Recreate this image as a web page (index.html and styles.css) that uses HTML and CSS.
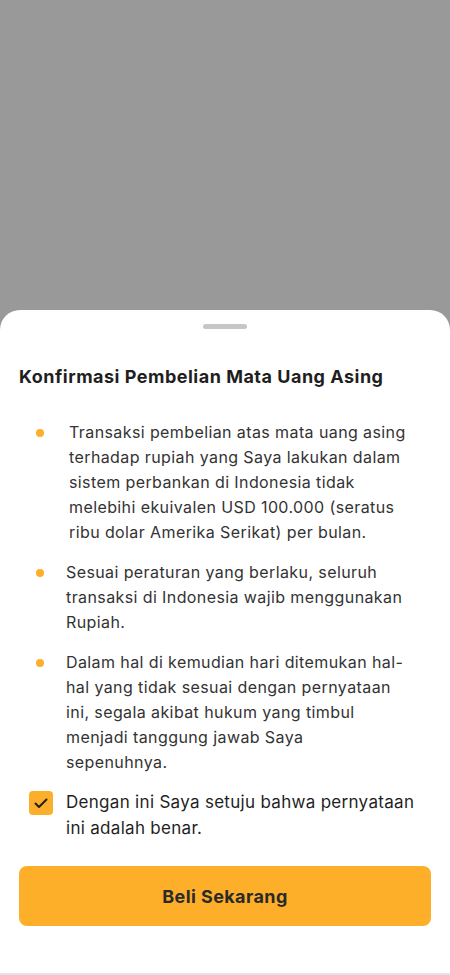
FILE: index.html
```html
<!DOCTYPE html>
<html lang="id">
<head>
    <meta charset="UTF-8">
    <meta name="viewport" content="width=device-width, initial-scale=1.0">
    <title>Konfirmasi Pembelian Mata Uang Asing</title>
    <link rel="stylesheet" href="styles.css">
</head>
<body>

    <div class="backdrop"></div>

    <!-- Bottom sheet -->
    <section class="sheet">
        <div class="handle"></div>

        <h1 class="sheet-title">Konfirmasi Pembelian Mata Uang Asing</h1>

        <ul class="terms">
            <li class="term term-first">
                Transaksi pembelian atas mata uang asing terhadap rupiah yang Saya lakukan dalam sistem perbankan di Indonesia tidak melebihi ekuivalen USD 100.000 (seratus ribu dolar Amerika Serikat) per bulan.
            </li>
            <li class="term">
                Sesuai peraturan yang berlaku, seluruh transaksi di Indonesia wajib menggunakan Rupiah.
            </li>
            <li class="term">
                Dalam hal di kemudian hari ditemukan hal-hal yang tidak sesuai dengan pernyataan ini, segala akibat hukum yang timbul menjadi tanggung jawab Saya sepenuhnya.
            </li>
        </ul>

        <label class="agree">
            <span class="checkbox">
                <svg width="14" height="11" viewBox="0 0 14 11">
                    <path d="M1.5 5.5 L5 9 L12.5 1.5" fill="none" stroke="#222" stroke-width="2" stroke-linecap="round" stroke-linejoin="round"/>
                </svg>
            </span>
            <span class="agree-text">Dengan ini Saya setuju bahwa pernyataan ini adalah benar.</span>
        </label>

        <button class="buy-btn">Beli Sekarang</button>
    </section>

</body>
</html>
```

FILE: styles.css
```css
/* Base */
body {
    margin: 0;
    padding: 0;
    height: 975px;
    display: flex;
    flex-direction: column;
    background-color: #999999;
    font-family: Inter, "Noto Sans", sans-serif;
    color: #2b2b2b;
    overflow: hidden;
}
.backdrop {
    flex: 1;
}

/* Sheet */
.sheet {
    background-color: #fff;
    border-radius: 20px 20px 0 0;
    padding: 14px 19px 0;
    height: 665px;
    box-sizing: border-box;
    display: flex;
    flex-direction: column;
    border-bottom: 2px solid #e4e4e4;
}
.handle {
    width: 44px;
    height: 5px;
    border-radius: 3px;
    background-color: #c6c6c6;
    align-self: center;
}
.sheet-title {
    margin: 36px 0 0;
    font-size: 18px;
    line-height: 24px;
    font-weight: 700;
    color: #1f1f1f;
    letter-spacing: 0.5px;
}

/* Terms list */
.terms {
    list-style: none;
    margin: 31px 0 0;
    padding: 0;
    display: flex;
    flex-direction: column;
    gap: 15px;
}
.term {
    position: relative;
    padding-left: 47px;
    padding-right: 25px;
    font-size: 16px;
    line-height: 25px;
    letter-spacing: 0.4px;
    color: #333;
}
.term-first { padding-left: 50px; }
.term::before {
    content: "";
    position: absolute;
    left: 17px;
    top: 9px;
    width: 8px;
    height: 8px;
    border-radius: 50%;
    background-color: #fbaf2a;
}

/* Agreement */
.agree {
    display: flex;
    align-items: flex-start;
    gap: 13px;
    margin-top: 14px;
    padding-left: 10px;
}
.checkbox {
    flex: none;
    width: 24px;
    height: 24px;
    margin-top: 2px;
    border-radius: 4px;
    background-color: #fbaf2a;
    display: flex;
    align-items: center;
    justify-content: center;
}
.agree-text {
    font-size: 17px;
    line-height: 26px;
    letter-spacing: 0.3px;
    color: #1f1f1f;
}

/* Button */
.buy-btn {
    margin-top: 25px;
    height: 60px;
    border: none;
    border-radius: 8px;
    background-color: #fdaf29;
    font-family: inherit;
    font-size: 18px;
    font-weight: 700;
    letter-spacing: 0.4px;
    color: #2a2a2a;
    cursor: pointer;
}
```
